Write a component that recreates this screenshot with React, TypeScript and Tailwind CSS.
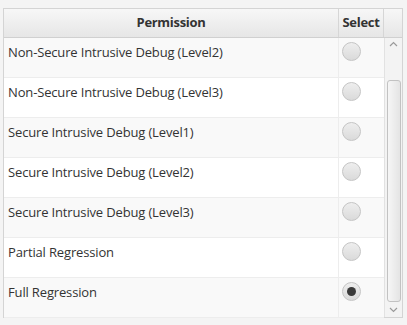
const rows = [
  { label: "Non-Secure Intrusive Debug (Level2)", checked: false },
  { label: "Non-Secure Intrusive Debug (Level3)", checked: false },
  { label: "Secure Intrusive Debug (Level1)", checked: false },
  { label: "Secure Intrusive Debug (Level2)", checked: false },
  { label: "Secure Intrusive Debug (Level3)", checked: false },
  { label: "Partial Regression", checked: false },
  { label: "Full Regression", checked: true },
];

const Radio = ({ checked }: { checked: boolean }) => (
  <div className="w-[19px] h-[19px] rounded-full border border-[#c4c4c4] bg-gradient-to-b from-[#eeeeee] to-[#dadada] flex items-center justify-center">
    {checked && <div className="w-[9px] h-[9px] rounded-full bg-[#3a3a3a]" />}
  </div>
);

export default function App() {
  return (
    <div className="w-[407px] h-[325px] bg-[#f4f4f4] pt-2 pl-[3px] font-['Open_Sans',sans-serif] text-[#333]">
      <div className="w-[400px] h-[310px] border border-[#d4d4d4] bg-white flex flex-col">
        {/* header */}
        <div className="flex h-[29px] shrink-0 bg-gradient-to-b from-[#f7f7f7] to-[#e6e6e6] border-b border-[#d0d0d0] text-[13px] font-bold tracking-[-0.3px]">
          <div className="w-[335px] flex items-center justify-center border-r border-[#d6d6d6]">Permission</div>
          <div className="w-[45px] flex items-center justify-center border-r border-[#d6d6d6]">Select</div>
          <div className="flex-1" />
        </div>
        <div className="flex flex-1 min-h-0">
          <div className="w-[380px] flex flex-col">
            {rows.map((r, i) => (
              <div
                key={r.label}
                className={`flex h-[40px] shrink-0 border-b border-[#ededed] ${i % 2 === 0 ? "bg-[#f9f9f9]" : "bg-white"}`}
              >
                <div className="w-[335px] pl-[4px] pt-[4px] text-[13px] leading-[20px] tracking-[-0.15px] border-r border-[#ededed]">{r.label}</div>
                <div className="w-[45px] pl-[3px] pt-[4px]">
                  <Radio checked={r.checked} />
                </div>
              </div>
            ))}
          </div>
          {/* scrollbar */}
          <div className="flex-1 bg-[#f3f3f3] border-l border-[#e2e2e2] flex flex-col items-center">
            <svg width="9" height="6" viewBox="0 0 9 6" className="mt-[3px] shrink-0">
              <path d="M1 5 L4.5 1.5 L8 5" fill="none" stroke="#9a9a9a" strokeWidth="1.2" />
            </svg>
            <div className="mt-[33px] w-[14px] h-[222px] rounded-[3px] border border-[#c2c2c2] bg-gradient-to-r from-[#f6f6f6] to-[#e4e4e4]" />
            <svg width="9" height="6" viewBox="0 0 9 6" className="mt-[5px] shrink-0">
              <path d="M1 1 L4.5 4.5 L8 1" fill="none" stroke="#9a9a9a" strokeWidth="1.2" />
            </svg>
          </div>
        </div>
      </div>
    </div>
  );
}
